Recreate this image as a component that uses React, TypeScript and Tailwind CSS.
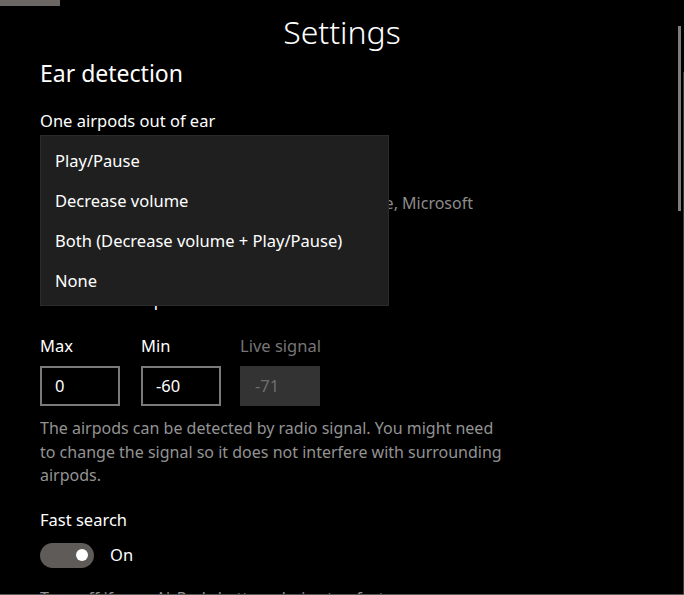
import React from "react";

export default function App() {
  return (
    <div className="relative w-[684px] h-[595px] overflow-hidden bg-black text-white font-['Noto_Sans',sans-serif]">
      {/* top-left title bar remnant */}
      <div className="absolute left-0 top-0 w-[60px] h-[6px] bg-[#6b6765]" />
      {/* right window border */}
      <div className="absolute right-0 top-[72px] w-[1px] h-[523px] bg-[#3a3a3a]" />
      {/* scrollbar thumb */}
      <div className="absolute left-[678px] top-[26px] w-[3px] h-[185px] bg-[#7d7d7d]" />
      {/* bottom border */}
      <div className="absolute left-0 bottom-0 w-full h-[1px] bg-[#5a5a5a]" />

      <div className="flex flex-col px-10">
        <div className="pt-[14px] h-[50px] leading-[36px] text-[32px] font-light text-center">Settings</div>
        <div className="mt-[5px] h-[36px] leading-[36px] text-[23px]">Ear detection</div>
        <div className="mt-[17px] h-[26px] leading-[26px] text-[16.5px]">One airpods out of ear</div>

        {/* content hidden behind the open dropdown */}
        <div className="h-[199px] flex flex-col">
          <div className="mt-[1px] h-[32px] w-[300px] border-2 border-[#7a7a7a]" />
          <div className="mt-[24px] h-[24px] leading-[24px] w-[433px] text-right text-[16px] text-[#8c8c8c] whitespace-nowrap overflow-hidden">
            Supported players: Groove, Microsoft
          </div>
          <div className="mt-[72px] h-[26px] leading-[26px] text-[16.5px] whitespace-nowrap">Bluetooth reception</div>
        </div>

        <div className="flex gap-[21px]">
          <div className="flex flex-col w-[80px]">
            <div className="h-[26px] leading-[26px] text-[16.5px]">Max</div>
            <div className="mt-[7px] h-[40px] border-2 border-[#7a7a7a] flex items-center pl-[13px] text-[16.5px]">0</div>
          </div>
          <div className="flex flex-col w-[80px]">
            <div className="h-[26px] leading-[26px] text-[16.5px]">Min</div>
            <div className="mt-[7px] h-[40px] border-2 border-[#7a7a7a] flex items-center pl-[13px] text-[16.5px]">-60</div>
          </div>
          <div className="flex flex-col w-[80px] -ml-[2px]">
            <div className="h-[26px] leading-[26px] text-[16.5px] text-[#767676] whitespace-nowrap">Live signal</div>
            <div className="mt-[7px] h-[40px] bg-[#333333] flex items-center pl-[15px] text-[16.5px] text-[#6e6e6e]">-71</div>
          </div>
        </div>

        <div className="mt-[11px] w-[465px] leading-[23.5px] text-[16px] text-[#939393]">
          The airpods can be detected by radio signal. You might need to change the signal so it does not interfere with surrounding airpods.
        </div>

        <div className="mt-[19px] h-[26px] leading-[26px] text-[16.5px]">Fast search</div>
        <div className="mt-[10px] flex items-center h-[25px]">
          <div className="w-[54px] h-[25px] rounded-full bg-[#5e5b59] flex items-center justify-end pr-[6px]">
            <div className="w-[12px] h-[12px] rounded-full bg-white" />
          </div>
          <div className="ml-[16px] text-[16.5px]">On</div>
        </div>
        <div className="mt-[17px] h-[26px] leading-[26px] text-[16px] text-[#939393] whitespace-nowrap">
          Turn off if your AirPods battery drains too fast.
        </div>
      </div>

      {/* open dropdown */}
      <div className="absolute left-[40px] top-[135px] w-[349px] h-[171px] bg-[#1f1f1f] border border-[#2b2b2b] pt-[5px]">
        {["Play/Pause", "Decrease volume", "Both (Decrease volume + Play/Pause)", "None"].map((t) => (
          <div key={t} className="h-[40px] leading-[40px] pl-[14px] text-[16.5px] text-white whitespace-nowrap">
            {t}
          </div>
        ))}
      </div>
    </div>
  );
}
